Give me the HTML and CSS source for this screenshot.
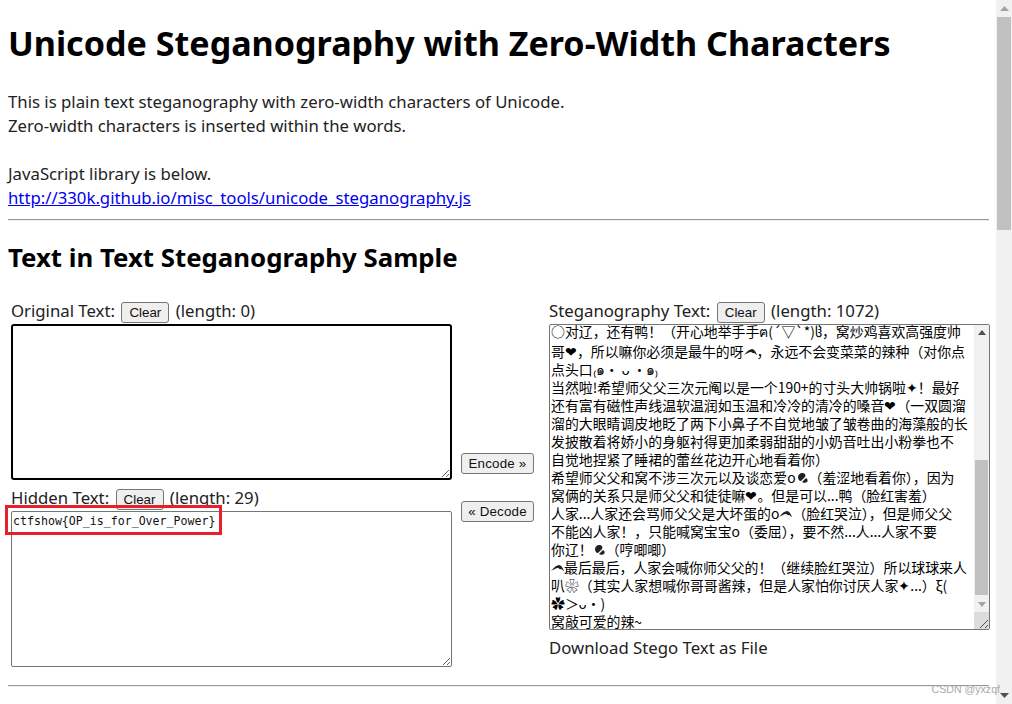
FILE: index.html
```html
<!doctype html>
<html lang="en">
<head>
  <meta charset="utf-8">
  <title>Unicode Steganography with Zero-Width Characters</title>
  <link rel="stylesheet" href="styles.css">
</head>
<body>
  <svg class="defs" width="0" height="0">
    <symbol id="cap" viewBox="0 0 13 12"><path d="M0 9C3 5 6 3 8 3c2 0 4 3 5 6-1 0-2-2-3-2-1 1-2-1-3-1C5 6 2 8 0 9z" fill="#222"/></symbol>
    <symbol id="blobs" viewBox="0 0 13 12"><path d="M6 1c3 0 4 2 3 4L5 9C3 9 2 7 2 5s2-4 4-4zM10 6c2 1 2 3 1 4s-4 1-5 0z" fill="#222"/></symbol>
  </svg>
  <div class="page">
    <h1>Unicode Steganography with Zero-Width Characters</h1>
    <p class="intro">
      This is plain text steganography with zero-width characters of Unicode.<br>
      Zero-width characters is inserted within the words.<br>
      <br>
      JavaScript library is below.<br>
      <a href="#">http://330k.github.io/misc_tools/unicode_steganography.js</a>
    </p>
    <hr>
    <h2>Text in Text Steganography Sample</h2>
    <div class="sample">
      <div class="leftCol">
        <div class="fieldLabel">Original Text: <button class="clearBtn">Clear</button> (length: 0)</div>
        <textarea class="textBox focused"></textarea>
        <div class="fieldLabel hiddenLabel">Hidden Text: <button class="clearBtn">Clear</button> (length: 29)</div>
        <div class="hiddenWrap">
          <textarea class="textBox hidden">ctfshow{OP_is_for_Over_Power}</textarea>
          <div class="redMark"></div>
        </div>
      </div>
      <div class="midCol">
        <button class="actionBtn">Encode »</button>
        <button class="actionBtn">« Decode</button>
      </div>
      <div class="rightCol">
        <div class="fieldLabel">Steganography Text: <button class="clearBtn">Clear</button> (length: 1072)</div>
        <div class="stegoBox">
          <div class="stegoText">
            <div class="lineFirst">○对辽，还有鸭！（开心地举手手ฅ(´▽`*)ჱ，窝炒鸡喜欢高强度帅</div>
            <div>哥❤，所以嘛你必须是最牛的呀<svg class="glyph"><use href="#cap"/></svg>，永远不会变菜菜的辣种（对你点</div>
            <div>点头口₍๑· ᴗ ·๑₎</div>
            <div>当然啦!希望师父父三次元阄以是一个190+的寸头大帅锅啦✦！最好</div>
            <div>还有富有磁性声线温软温润如玉温和冷冷的清冷的嗓音❤（一双圆溜</div>
            <div>溜的大眼睛调皮地眨了两下小鼻子不自觉地皱了皱卷曲的海藻般的长</div>
            <div>发披散着将娇小的身躯衬得更加柔弱甜甜的小奶音吐出小粉拳也不</div>
            <div>自觉地捏紧了睡裙的蕾丝花边开心地看着你）</div>
            <div>希望师父父和窝不涉三次元以及谈恋爱o<svg class="glyph"><use href="#blobs"/></svg>（羞涩地看着你），因为</div>
            <div>窝俩的关系只是师父父和徒徒嘛❤。但是可以...鸭（脸红害羞）</div>
            <div>人家...人家还会骂师父父是大坏蛋的o<svg class="glyph"><use href="#cap"/></svg>（脸红哭泣），但是师父父</div>
            <div>不能凶人家！，只能喊窝宝宝o（委屈），要不然...人...人家不要</div>
            <div>你辽！<svg class="glyph"><use href="#blobs"/></svg>（哼唧唧）</div>
            <div><svg class="glyph"><use href="#cap"/></svg>最后最后，人家会喊你师父父的！（继续脸红哭泣）所以球球来人</div>
            <div>叭❀（其实人家想喊你哥哥酱辣，但是人家怕你讨厌人家✦...）ξ(</div>
            <div>✿＞ᴗ•)</div>
            <div>窝敲可爱的辣~</div>
          </div>
          <div class="boxScroll">
            <svg class="arrow" width="8" height="5" viewBox="0 0 8 5"><path d="M4 0 8 5H0z" fill="#505050"/></svg>
            <div class="boxTrack"><div class="boxThumb"></div></div>
            <svg class="arrow" width="8" height="5" viewBox="0 0 8 5"><path d="M0 0H8L4 5z" fill="#a3a3a3"/></svg>
            <div class="boxCorner">
              <svg width="12" height="12" viewBox="0 0 12 12"><path d="M11 3 3 11M11 8 8 11" stroke="#555" fill="none"/></svg>
            </div>
          </div>
        </div>
        <div class="download">Download Stego Text as File</div>
      </div>
    </div>
    <hr class="lastRule">
  </div>
  <div class="pageScroll">
    <svg width="9" height="5" viewBox="0 0 9 5"><path d="M4.5 0 9 5H0z" fill="#a3a3a3"/></svg>
    <div class="pageTrack"><div class="pageThumb"></div></div>
    <svg width="9" height="5" viewBox="0 0 9 5"><path d="M0 0H9L4.5 5z" fill="#505050"/></svg>
  </div>
  <div class="watermark">CSDN @yxzqf</div>
</body>
</html>
```
FILE: styles.css
```css
html, body{
  margin: 0;
  height: 704px;
  overflow: hidden;
}
body{
  display: flex;
  font-family: "Noto Sans", "Open Sans", sans-serif;
  font-size: 16.75px;
  line-height: 24px;
  color: #222;
  background: #fff;
}
.defs{
  display: none;
}
.page{
  flex: 1;
  min-width: 0;
  padding: 0 7px 0 8px;
}
h1{
  margin: 21px 0 0;
  font-size: 34.1px;
  line-height: 44px;
  color: #000;
}
.intro{
  margin: 25px 0 0;
}
a{
  color: #0000ee;
}
hr{
  margin: 9px 0 0;
  border: 0;
  border-top: 1px solid #999;
  border-bottom: 1px solid #eee;
}
h2{
  margin: 18px 0 0;
  font-size: 25.8px;
  line-height: 36px;
  color: #000;
}
.sample{
  display: flex;
  margin-top: 24px;
}
.leftCol{
  flex: none;
  width: 453px;
  padding-left: 3px;
  box-sizing: border-box;
}
.midCol{
  flex: none;
  width: 88px;
  padding-top: 154px;
  box-sizing: border-box;
  display: flex;
  flex-direction: column;
  align-items: flex-start;
  gap: 27px;
}
.rightCol{
  flex: none;
  width: 441px;
}
.fieldLabel{
  height: 25px;
  line-height: 24px;
  white-space: nowrap;
}
.hiddenLabel{
  margin-top: 4px;
  height: 27px;
  line-height: 27px;
}
.clearBtn, .actionBtn{
  font-family: "Liberation Sans", Arial, sans-serif;
  font-size: 13.33px;
  line-height: 15px;
  color: #111;
  background: #efefef;
  border: 1px solid #767676;
  border-radius: 3px;
}
.clearBtn{
  width: 48px;
  height: 21px;
  margin: 0 2px;
  padding: 1px 0;
}
.actionBtn{
  width: 73px;
  height: 21px;
  padding: 1px 0;
  letter-spacing: 0.2px;
  white-space: nowrap;
}
.textBox{
  display: block;
  width: 441px;
  height: 156px;
  box-sizing: border-box;
  margin: 0;
  padding: 2px 1px;
  border: 1px solid #767676;
  border-radius: 2px;
  font-family: "DejaVu Sans Mono", monospace;
  font-size: 11.6px;
  line-height: 15px;
  background: #fff;
  color: #111;
}
.focused{
  border: 2px solid #000;
  border-radius: 3px;
  outline: none;
}
.hiddenWrap{
  position: relative;
}
.redMark{
  position: absolute;
  left: -6px;
  top: -6px;
  width: 217px;
  height: 30px;
  box-sizing: border-box;
  border: 3px solid #e8202a;
}
.stegoBox{
  display: flex;
  width: 441px;
  height: 306px;
  box-sizing: border-box;
  border: 1px solid #767676;
  border-radius: 2px;
}
.stegoText{
  flex: 1;
  min-width: 0;
  padding-left: 1px;
  font-family: "Noto Sans CJK SC", sans-serif;
  font-size: 13.9px;
  line-height: 18px;
  color: #000;
  white-space: nowrap;
}
.glyph{
  width: 13px;
  height: 12px;
  vertical-align: -1px;
}
.lineFirst{
  line-height: 13px;
  margin-bottom: 4px;
}
.boxScroll{
  flex: none;
  width: 15px;
  display: flex;
  flex-direction: column;
  align-items: center;
  background: #f1f1f1;
}
.arrow{
  flex: none;
  margin: 5px 0;
}
.boxTrack{
  flex: 1;
  width: 100%;
  display: flex;
  flex-direction: column;
  justify-content: flex-end;
}
.boxThumb{
  height: 135px;
  margin: 0 1px 2px;
  background: #c1c1c1;
}
.boxCorner{
  flex: none;
  width: 15px;
  height: 17px;
  display: flex;
  align-items: flex-end;
  justify-content: flex-end;
  background: #dcdcdc;
}
.download{
  margin-top: 6px;
}
.lastRule{
  margin-top: 18px;
}
.pageScroll{
  flex: none;
  width: 16px;
  height: 704px;
  display: flex;
  flex-direction: column;
  align-items: center;
  padding-top: 6px;
  padding-bottom: 6px;
  box-sizing: border-box;
  background: #f1f1f1;
}
.pageTrack{
  flex: 1;
  width: 100%;
  padding: 6px 0;
}
.pageThumb{
  height: 213px;
  margin: 0 1px;
  background: #c1c1c1;
}
.watermark{
  position: absolute;
  right: 12px;
  bottom: 9px;
  font-family: "Liberation Sans", Arial, sans-serif;
  font-size: 10.6px;
  line-height: 12px;
  color: #a9a9a9;
}
```
